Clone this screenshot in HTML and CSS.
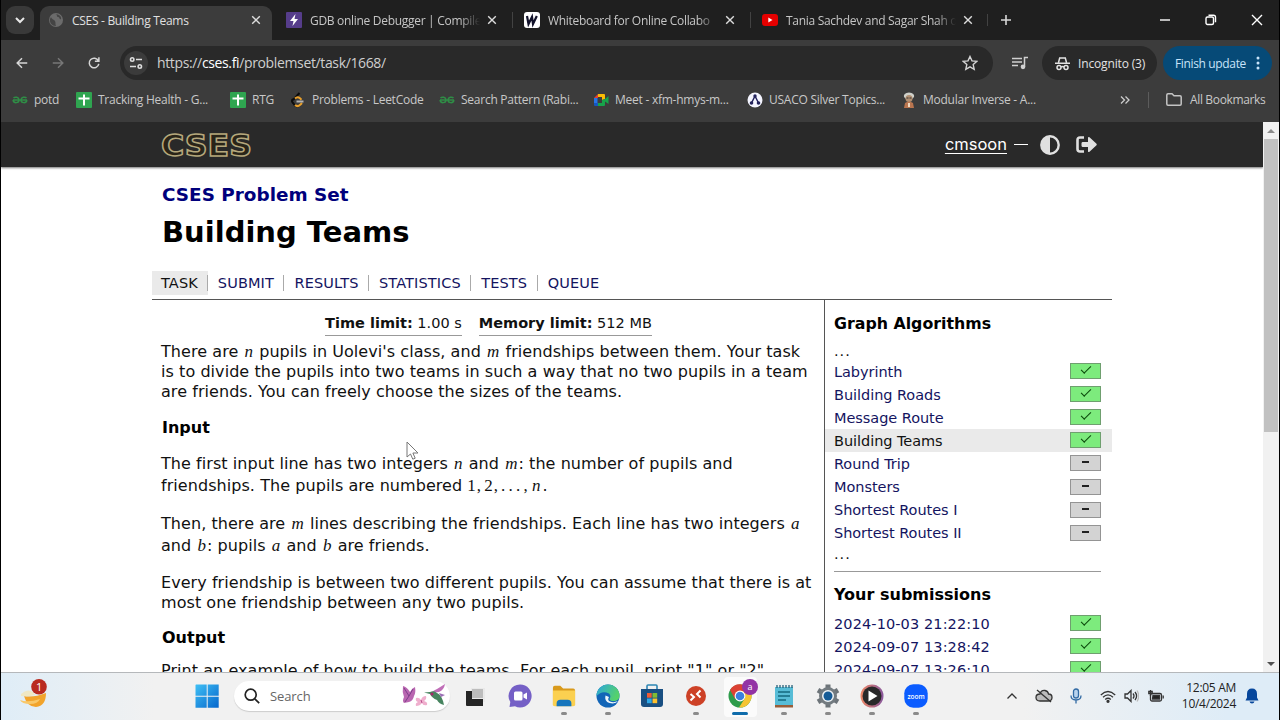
FILE: index.html
```html
<!DOCTYPE html>
<html lang="en">
<head>
    <meta charset="UTF-8">
    <meta name="viewport" content="width=device-width, initial-scale=1.0">
    <title>CSES - Building Teams</title>
    <link rel="stylesheet" href="styles.css">
</head>
<body>
<div class="screen">

    <!-- Tab strip -->
    <div class="tabstrip">
        <div class="tab-search">
            <svg width="12" height="12" viewBox="0 0 12 12" fill="none" stroke="#e8e8e8" stroke-width="2"><path d="M2 4l4 4 4-4"/></svg>
        </div>
        <div class="tab active">
            <svg class="fav" viewBox="0 0 16 16"><circle cx="8" cy="8" r="7" fill="#6b6b6b"/><path d="M3 5c1 3 3 2 4 4s0 3 1 5C4 14 1.500 11 2 7zM7 2c3 0 1 3 3 3s1 3 3 2c1-2-2-5-6-5z" fill="#444"/></svg>
            <span class="tab-title">CSES - Building Teams</span>
            <svg class="x" viewBox="0 0 10 10"><path d="M1.200 1.200l7.600 7.600M8.800 1.200l-7.600 7.600"/></svg>
        </div>
        <div class="tab">
            <svg class="fav" viewBox="0 0 16 16"><rect width="16" height="16" rx="1" fill="#563d8b"/><path d="M9.500 2L4 9h3.500L6.500 14 12 7H8.500z" fill="#fff"/></svg>
            <span class="tab-title fade">GDB online Debugger | Compile</span>
            <svg class="x" viewBox="0 0 10 10"><path d="M1.200 1.200l7.600 7.600M8.800 1.200l-7.600 7.600"/></svg>
        </div>
        <div class="tab">
            <svg class="fav" viewBox="0 0 16 16"><rect width="16" height="16" rx="3" fill="#fff"/><path d="M3 4l1.500 8L8 5l1 7 3.800-8" fill="none" stroke="#12122a" stroke-width="2.200"/></svg>
            <span class="tab-title fade">Whiteboard for Online Collabo</span>
            <svg class="x" viewBox="0 0 10 10"><path d="M1.200 1.200l7.600 7.600M8.800 1.200l-7.600 7.600"/></svg>
        </div>
        <div class="tab">
            <svg class="fav" viewBox="0 0 16 16"><rect y="2" width="16" height="12" rx="3" fill="#e60000"/><path d="M6.300 5.500v5l4.200-2.500z" fill="#fff"/></svg>
            <span class="tab-title fade">Tania Sachdev and Sagar Shah o</span>
            <svg class="x" viewBox="0 0 10 10"><path d="M1.200 1.200l7.600 7.600M8.800 1.200l-7.600 7.600"/></svg>
        </div>
        <svg class="new-tab" width="12" height="12" viewBox="0 0 12 12" stroke="#d8d8d8" stroke-width="1.600"><path d="M6 1v10M1 6h10"/></svg>
        <div class="win-buttons">
            <svg width="12" height="12" viewBox="0 0 12 12"><path d="M1 6h10"/></svg>
            <svg width="12" height="12" viewBox="0 0 12 12"><rect x="1" y="3" width="7.500" height="7.500" rx="1.500"/><path d="M3.500 1.200h5a2 2 0 0 1 2 2v5"/></svg>
            <svg width="12" height="12" viewBox="0 0 12 12"><path d="M1 1l10 10M11 1L1 11"/></svg>
        </div>
    </div>

    <!-- Toolbar -->
    <div class="toolbar">
        <svg class="nav-btn" viewBox="0 0 16 16"><path d="M14 8H3M8 2.500L2.500 8 8 13.500"/></svg>
        <svg class="nav-btn off" viewBox="0 0 16 16"><path d="M2 8h11M8 2.500L13.500 8 8 13.500"/></svg>
        <svg class="nav-btn" viewBox="0 0 16 16"><path d="M13 5.500A5.500 5.500 0 1 0 13.500 9M13.600 1.500V6H9"/></svg>
        <div class="omnibox">
            <span class="site-info">
                <svg width="14" height="14" viewBox="0 0 14 14" fill="none" stroke="#ddd" stroke-width="1.600"><circle cx="3.200" cy="3.500" r="1.700"/><path d="M7 3.500h6M1 10.500h6"/><circle cx="10.800" cy="10.500" r="1.700"/></svg>
            </span>
            <span class="url">https://<b>cses.fi</b>/problemset/task/1668/</span>
            <svg class="star" viewBox="0 0 16 16"><path d="M8 1.500l2 4.400 4.700.500-3.500 3.200 1 4.700L8 11.900l-4.200 2.400 1-4.700L1.300 6.400 6 5.900z"/></svg>
        </div>
        <svg class="media" viewBox="0 0 16 14"><path d="M0 2.500h10M0 6h10M0 9.500h6M12.500 10.500v-9H16"/><circle cx="11" cy="10.800" r="1.600" fill="#d0d0d0"/></svg>
        <div class="incognito">
            <svg width="15" height="15" viewBox="0 0 15 15" fill="none" stroke="#e2e2e2" stroke-width="1.500"><path d="M3.500 6.500L4.700 2h5.600l1.200 4.500M0 7.200h15"/><circle cx="4" cy="11.500" r="2"/><circle cx="11" cy="11.500" r="2"/><path d="M6 11q1.500-.8 3 0"/></svg>
            <span>Incognito (3)</span>
        </div>
        <div class="update">
            <span>Finish update</span>
            <svg width="4" height="14" viewBox="0 0 4 14" fill="#c8e4fa"><circle cx="2" cy="2" r="1.500"/><circle cx="2" cy="7" r="1.500"/><circle cx="2" cy="12" r="1.500"/></svg>
        </div>
    </div>

    <!-- Bookmarks -->
    <div class="bookmarks">
        <div class="bm"><svg class="bi" viewBox="0 0 16 16" fill="none" stroke="#2f8d46" stroke-width="1.500"><path d="M1 8h14M1.500 6C3 4.500 7 5 7 8s-5 4-6 0M14.500 6C13 4.500 9 5 9 8s5 4 6 0"/></svg><span>potd</span></div>
        <div class="bm"><svg class="bi" viewBox="0 0 16 16"><rect width="16" height="16" rx="1" fill="#2fa550"/><path d="M8 2.500v11M2.500 6.500h11" stroke="#fff" stroke-width="2"/></svg><span>Tracking Health - G...</span></div>
        <div class="bm"><svg class="bi" viewBox="0 0 16 16"><rect width="16" height="16" rx="1" fill="#2fa550"/><path d="M8 2.500v11M2.500 6.500h11" stroke="#fff" stroke-width="2"/></svg><span>RTG</span></div>
        <div class="bm"><svg class="bi" viewBox="0 0 16 16" fill="none" stroke-width="2"><path d="M9.500 1L3 8" stroke="#0c0c0c"/><path d="M3 7q-2 2 0 4l2 2.500q2.500 2 5-.5" stroke="#0c0c0c"/><path d="M5 6.500q2.500-2.500 5-.2l1.500 1.400M5 13q2.500 2.500 5.500-.5l1.500-1.500" stroke="#e9a02c"/><path d="M6.500 9.500h7" stroke="#b3b3b3"/></svg><span>Problems - LeetCode</span></div>
        <div class="bm"><svg class="bi" viewBox="0 0 16 16" fill="none" stroke="#2f8d46" stroke-width="1.500"><path d="M1 8h14M1.500 6C3 4.500 7 5 7 8s-5 4-6 0M14.500 6C13 4.500 9 5 9 8s5 4 6 0"/></svg><span>Search Pattern (Rabi...</span></div>
        <div class="bm"><svg class="bi" viewBox="0 0 16 16"><path d="M1 6l4-4v4z" fill="#e43d30"/><path d="M5 2h6q1 0 1 1v4l-3 1V5H5z" fill="#fbbc04"/><path d="M1 6h3.500v5H1z" fill="#2874e6"/><path d="M1 11h4v3H2q-1 0-1-1z" fill="#1556c0"/><path d="M5 11h4V8l3-1 3.500-3v8L12 9.500V13q0 1-1 1H5z" fill="#17a34a"/></svg><span>Meet - xfm-hmys-m...</span></div>
        <div class="bm"><svg class="bi" viewBox="0 0 16 16"><circle cx="8" cy="8" r="7.500" fill="#f4f5ff"/><path d="M8 4L4.500 11M8 4l3.500 7" stroke="#23235c" stroke-width="1.500"/><g fill="#23235c"><circle cx="8" cy="4" r="1.700"/><circle cx="4.500" cy="11" r="1.800"/><circle cx="11.500" cy="11" r="1.800"/></g></svg><span>USACO Silver Topics...</span></div>
        <div class="bm"><svg class="bi" viewBox="0 0 16 16"><path d="M3 5q-1-4 5-4.500Q14 1 13 5l-2 2H5z" fill="#cfd0c9"/><circle cx="8" cy="6.500" r="3.500" fill="#b18f72"/><path d="M5.500 6h2M8.500 6h2" stroke="#333"/><path d="M4 11q4-3 8 0l1 5H3z" fill="#b9754f"/><path d="M7 11h2v4H7z" fill="#f1d9c0"/></svg><span>Modular Inverse - A...</span></div>
        <svg class="more" width="10" height="10" viewBox="0 0 10 10" fill="none" stroke="#ccc" stroke-width="1.300"><path d="M1 1.500L4.500 5 1 8.500M5.500 1.500L9 5 5.500 8.500"/></svg>
        <i class="bm-sep"></i>
        <svg class="folder" width="16" height="13" viewBox="0 0 16 13" fill="none" stroke="#c4c4c4" stroke-width="1.500"><path d="M.8 2q0-1.200 1.200-1.200h4l2 2h6q1.200 0 1.200 1.200v7q0 1.200-1.200 1.200H2Q.8 12.200.8 11z"/></svg>
        <span class="all">All Bookmarks</span>
    </div>

    <!-- Page -->
    <div class="viewport">
        <div class="page">
            <div class="header">
                <svg class="logo" width="94" height="28" viewBox="0 0 94 28"><text x="1" y="25" textLength="91" lengthAdjust="spacingAndGlyphs">CSES</text></svg>
                <div class="controls">
                    <a href="#">cmsoon</a>
                    <span class="dash"></span>
                    <svg class="theme" width="20" height="20" viewBox="0 0 20 20"><circle cx="10" cy="10" r="8.700" fill="none" stroke="#e0e0e0" stroke-width="2.400"/><path d="M10 1a9 9 0 0 0 0 18z" fill="#e0e0e0"/></svg>
                    <svg width="21" height="17" viewBox="0 0 21 17"><path d="M8 1.500H4Q1.500 1.500 1.500 4v9Q1.500 15.500 4 15.500h4" fill="none" stroke="#e0e0e0" stroke-width="2.600"/><path d="M6.500 6H12V1.500q.5-1 1.500-.3l7 6.500q.6.800 0 1.500l-7 6.500q-1 .7-1.500-.3V11H6.500q-1-.2-1-1.200V7.200q0-1 1-1.200z" fill="#e0e0e0"/></svg>
                </div>
            </div>

            <div class="title-block">
                <h3><a href="#">CSES Problem Set</a></h3>
                <h1>Building Teams</h1>
                <ul class="nav">
                    <li class="current"><a href="#">TASK</a></li>
                    <li><a href="#">SUBMIT</a></li>
                    <li><a href="#">RESULTS</a></li>
                    <li><a href="#">STATISTICS</a></li>
                    <li><a href="#">TESTS</a></li>
                    <li><a href="#">QUEUE</a></li>
                </ul>
            </div>

            <div class="content-wrapper">
                <div class="content">
                    <ul class="limits">
                        <li><b>Time limit:</b> 1.00 s</li>
                        <li><b>Memory limit:</b> 512 MB</li>
                    </ul>
                    <p>There are <i>n</i> pupils in Uolevi's class, and <i>m</i> friendships between them. Your task<br>
                    is to divide the pupils into two teams in such a way that no two pupils in a team<br>
                    are friends. You can freely choose the sizes of the teams.</p>
                    <h4>Input</h4>
                    <p class="math">The first input line has two integers <i>n</i> and <i>m</i>: the number of pupils and<br>
                    friendships. The pupils are numbered <span class="num">1,&#8202;2,&#8202;.&#8202;.&#8202;.&#8202;,&#8202;<i>n</i></span>.</p>
                    <p class="math">Then, there are <i>m</i> lines describing the friendships. Each line has two integers <i>a</i><br>
                    and <i>b</i>: pupils <i>a</i> and <i>b</i> are friends.</p>
                    <p>Every friendship is between two different pupils. You can assume that there is at<br>
                    most one friendship between any two pupils.</p>
                    <h4>Output</h4>
                    <p class="print">Print an example of how to build the teams. For each pupil, print "1" or "2"</p>
                </div>

                <div class="sidebar">
                    <h4>Graph Algorithms</h4>
                    <div class="dots">...</div>
                    <div class="row"><a href="#">Labyrinth</a><span class="score full"></span></div>
                    <div class="row"><a href="#">Building Roads</a><span class="score full"></span></div>
                    <div class="row"><a href="#">Message Route</a><span class="score full"></span></div>
                    <div class="row current"><a href="#">Building Teams</a><span class="score full"></span></div>
                    <div class="row"><a href="#">Round Trip</a><span class="score"></span></div>
                    <div class="row"><a href="#">Monsters</a><span class="score"></span></div>
                    <div class="row"><a href="#">Shortest Routes I</a><span class="score"></span></div>
                    <div class="row"><a href="#">Shortest Routes II</a><span class="score"></span></div>
                    <div class="dots last">...</div>
                    <hr>
                    <h4 class="sub">Your submissions</h4>
                    <div class="row date"><a href="#">2024-10-03 21:22:10</a><span class="score full"></span></div>
                    <div class="row date"><a href="#">2024-09-07 13:28:42</a><span class="score full"></span></div>
                    <div class="row date"><a href="#">2024-09-07 13:26:10</a><span class="score full"></span></div>
                </div>
            </div>
        </div>
        <div class="scrollbar">
            <span class="arrow up"></span>
            <span class="thumb"></span>
            <span class="arrow down"></span>
        </div>
    </div>

    <!-- Taskbar -->
    <div class="taskbar">
        <div class="weather">
            <svg width="28" height="30" viewBox="0 0 28 30"><path d="M4 17q9 2 22-3 0 13-10 14-9 0-12-11z" fill="#f2a42c"/><path d="M0 21q8 3 20-1-2 5-10 5T0 21z" fill="#f9c869"/><path d="M1 15q6-6 12-2l2 3q-6 2-14 1z" fill="#efe7c4"/><circle cx="19" cy="7.800" r="7.800" fill="#b92a20"/></svg>
            <span class="count">1</span>
        </div>
        <svg class="start" width="24" height="24" viewBox="0 0 24 24"><defs><linearGradient id="win" x1="0" y1="0" x2="1" y2="1"><stop offset="0" stop-color="#3fc0f5"/><stop offset="1" stop-color="#0666cc"/></linearGradient></defs><path d="M1 .5h10.700v11.200H.5V1zM12.700.5h11v11.200h-11zM.5 12.700h11.200v11H.5zM12.700 12.700h11v11h-11z" fill="url(#win)"/></svg>
        <div class="search">
            <svg width="16" height="16" viewBox="0 0 16 16" fill="none" stroke="#222" stroke-width="1.700"><circle cx="6.700" cy="6.700" r="5.500"/><path d="M10.800 10.800l4.400 4.400"/></svg>
            <span>Search</span>
            <svg class="bird" width="46" height="26" viewBox="0 0 46 26">
                <path d="M2 3q4 1 7 6 2-4 5-5 1 6-1 9-1 5-5 6l-5 1q-2-2 0-6Q1 9 2 3z" fill="#b966b0"/>
                <path d="M3 5l5 8-4 6M12 6l-4 7" stroke="#7d3f8b" fill="none"/>
                <path d="M15 15q3-1 5 2 1-4 5-4 1 3-2 5 4 1 3 4-4 1-5-2-2 3-6 3-1-3 2-4-3-1-2-4z" fill="#efaecd"/>
                <path d="M20 17l1 3" stroke="#b9508c"/>
                <path d="M30 10q3-3 6-4l8-5q-1 6-6 8z" fill="#c06fb8"/>
                <path d="M23 9.500l6-.5q4-2 7 1 5 2 7 12-5-1-7-5-5-2-7-6z" fill="#47845f"/>
                <path d="M38 10l6 2-4 2z" fill="#9b6fb5"/>
                <circle cx="31" cy="11" r="1.500" fill="#a92568"/>
            </svg>
        </div>
        <div class="apps">
            <div class="app"><svg viewBox="0 0 24 24"><path d="M8 4h14v14H8z" fill="#e9e9e9"/><path d="M9 5h11v9H9z" fill="#bdbdbd"/><path d="M3 7h6v8h11v7H4q-1 0-1-1z" fill="#252525"/></svg></div>
            <div class="app"><svg viewBox="0 0 24 24"><path d="M12 .5a11.500 11.500 0 1 1-5 21.800L1.500 23l.8-5A11.500 11.500 0 0 1 12 .5z" fill="#7560c6"/><rect x="6" y="7.500" width="8.500" height="9" rx="1.500" fill="#fff"/><path d="M15.500 10.500l3.500-2v7l-3.500-2z" fill="#fff"/></svg></div>
            <div class="app open"><svg viewBox="0 0 26 24"><path d="M1 3q0-2 2-2h6l3 3h11q2 0 2 2v16H1z" fill="#d99a1c"/><path d="M1 6h24v15q0 2-2 2H3q-2 0-2-2z" fill="#fbd050"/><path d="M5 23v-3q0-4 4-4h8q4 0 4 4v3z" fill="#1676bd"/></svg></div>
            <div class="app open"><svg viewBox="0 0 24 24"><defs><linearGradient id="edge" x1="0" y1="0" x2="1" y2=".4"><stop offset="0" stop-color="#2ba5df"/><stop offset="1" stop-color="#55d26a"/></linearGradient></defs><circle cx="12" cy="12" r="11.500" fill="#1265b7"/><path d="M.5 12A11.500 11.500 0 0 1 23.500 12q0 4-4.500 5-5 .5-5.500-2 2-3-.5-5.500Q6 6 .5 12z" fill="url(#edge)"/><path d="M9.500 11.500q-1.500 6 4 7.500 6 1.500 8.500-2-4 2-8 .5-3-1.500-1-4.500z" fill="#eef6fb"/></svg></div>
            <div class="app"><svg viewBox="0 0 24 24"><path d="M7 5V2q0-1 1-1h8q1 0 1 1v3" fill="none" stroke="#2d86b4" stroke-width="1.600"/><path d="M1 5h22v15q0 3-3 3H4q-3 0-3-3z" fill="#194f82"/><path d="M7 9h4.700v4.700H7z" fill="#ef5b35"/><path d="M12.500 9h4.700v4.700h-4.700z" fill="#80bb35"/><path d="M7 14.500h4.700v4.700H7z" fill="#2da8e8"/><path d="M12.500 14.500h4.700v4.700h-4.700z" fill="#fdc12f"/></svg></div>
            <div class="app open"><svg viewBox="0 0 24 24"><circle cx="12" cy="12" r="10" fill="#cd4126"/><path d="M6.500 10l3.500 3-3.500 3.500M16.500 6.500l-3.500 3.500 3.500 3.500" fill="none" stroke="#fff" stroke-width="2"/></svg></div>
            <div class="app open chrome"><svg viewBox="0 0 24 24"><circle cx="12" cy="12" r="11.500" fill="#2e9c4b"/><path d="M2 6A11.500 11.500 0 0 1 22.400 7H12l-5 8z" fill="#dc4234"/><path d="M12 7h10.400A11.500 11.500 0 0 1 11 23.500L17 14z" fill="#f6c433"/><circle cx="12" cy="12" r="5.400" fill="#fff"/><circle cx="12" cy="12" r="4.300" fill="#3b80df"/></svg><span class="profile">a</span></div>
            <div class="app open"><svg viewBox="0 0 24 24"><path d="M3 3h18v19H3z" fill="#57bcd6"/><path d="M3 21h18v2.500H3z" fill="#995d38"/><path d="M5 1v3M8 1v3M11 1v3M14 1v3M17 1v3M20 1v3" stroke="#286079" stroke-width="1.300"/><path d="M6 8h12M6 12h12M6 16h8" stroke="#15687f" stroke-width="1.300"/></svg></div>
            <div class="app open"><svg viewBox="0 0 24 24"><g stroke="#6d7479" stroke-width="5"><path d="M12 .5v23M2 6.200l20 11.600M2 17.800L22 6.200"/></g><circle cx="12" cy="12" r="7.500" fill="#f0f4f7" stroke="#737b80" stroke-width="3"/><circle cx="12" cy="12" r="4.500" fill="#155b96"/></svg></div>
            <div class="app open"><svg viewBox="0 0 24 24"><defs><linearGradient id="play"><stop offset="0" stop-color="#ed8764"/><stop offset="1" stop-color="#88579e"/></linearGradient></defs><circle cx="12" cy="12" r="11.500" fill="url(#play)"/><circle cx="12" cy="12" r="9.500" fill="#292929"/><path d="M8.500 6.500l9 5.500-9 5.500z" fill="#fff"/></svg></div>
            <div class="app open"><svg viewBox="0 0 24 24"><rect x=".3" y=".3" width="23.400" height="23.400" rx="9" fill="#0b5cff"/></svg><span class="zoom">zoom</span></div>
        </div>
        <div class="tray">
            <svg width="12" height="8" viewBox="0 0 12 8"><path d="M1.500 6.500L6 2l4.500 4.500"/></svg>
            <svg width="18" height="14" viewBox="0 0 18 14"><path d="M5 12q-4 0-4-3.500T5 5q1-4 5-3.500 3 .5 3.500 3.500 3.500 0 3.500 3.500T13 12z" fill="#bbb"/><path d="M2 1l14 12"/></svg>
            <svg class="mic" width="12" height="16" viewBox="0 0 12 16"><rect x="3.500" y="1" width="5" height="9" rx="2.500" fill="#b8d3ee"/><path d="M1 7.500q0 4.500 5 4.500t5-4.500M6 12v3.500"/></svg>
            <svg width="16" height="13" viewBox="0 0 16 13"><path d="M.8 5Q8-2 15.200 5M3 7.300q5-4.800 10 0M5.200 9.500q2.800-2.500 5.600 0"/><circle cx="8" cy="11.300" r="1" fill="#333"/></svg>
            <svg width="15" height="14" viewBox="0 0 15 14"><path d="M1 5h2.500L7 1.500v11L3.500 9H1zM9 4.500q2 2.500 0 5M11 3q3.200 4 0 8"/><path d="M13 1.500q3.500 5.500 0 11" stroke="#bbb"/></svg>
            <svg width="16" height="14" viewBox="0 0 16 14"><rect x="2.500" y="4.500" width="11" height="7.500" rx="1.500"/><path d="M5 6.500h6.500V10H4.500z" fill="#222"/><path d="M15.200 6.500v3M2.500 1v6M.8 2.500h3.400v2H.8z"/></svg>
        </div>
        <div class="clock">12:05 AM<br>10/4/2024</div>
        <svg class="bell" width="14" height="16" viewBox="0 0 14 16"><path d="M7 .5q5 0 5 5.500v3.500l1.500 3H.5l1.500-3V6Q2 .5 7 .5zM4.500 13.500h5Q9 15.500 7 15.500t-2.500-2z" fill="#07479c"/></svg>
    </div>

    <!-- mouse pointer -->
    <svg class="pointer" width="13" height="19" viewBox="0 0 13 19"><path d="M1 1v15l3.500-3 2.300 5.200 2.400-1-2.300-5.200H12z" fill="#fff" stroke="#777"/></svg>
</div>
</body>
</html>
```
FILE: styles.css
```css
body {
    margin: 0;
    background: #000;
    overflow: hidden;
}
a {
    color: #14145f;
    text-decoration: none;
}
.screen {
    width: 1278px;
    height: 720px;
    margin: 0 1px;
    display: flex;
    flex-direction: column;
    position: relative;
    overflow: hidden;
    font-family: "Open Sans", "Noto Sans", sans-serif;
    font-size: 12px;
    background: #3c3c3c;
}

/* tabs */
.tabstrip {
    height: 40px;
    flex: none;
    display: flex;
    align-items: center;
    background: #1f1f1f;
    color: #c6c6c6;
}
.tab-search {
    width: 28px;
    height: 28px;
    margin-left: 5px;
    border-radius: 9px;
    background: #393939;
    display: flex;
    align-items: center;
    justify-content: center;
}
.tab {
    box-sizing: border-box;
    width: 238px;
    height: 34px;
    margin-top: 6px;
    padding: 0 13px 6px 14px;
    display: flex;
    align-items: center;
    position: relative;
}
.tab.active {
    width: 232px;
    margin-left: 6px;
    padding-left: 8px;
    padding-right: 11px;
    border-radius: 9px 9px 0 0;
    background: #3c3c3c;
    color: #e0e0e0;
}
.tab + .tab + .tab::before,
.tab + .new-tab {
    border-left: 1px solid #424242;
}
.tab + .tab + .tab::before {
    content: "";
    position: absolute;
    left: 2px;
    top: 6px;
    height: 16px;
}
.fav {
    width: 16px;
    height: 16px;
    margin-right: 8px;
    flex: none;
}
.tab-title {
    flex: 1;
    white-space: nowrap;
    font-size: 12px;
    letter-spacing: -0.3px;
}
.tab-title.fade {
    flex: none;
    width: 170px;
}
.fade {
    -webkit-mask-image: linear-gradient(to right, #000 88%, transparent);
    mask-image: linear-gradient(to right, #000 88%, transparent);
}
.x {
    width: 10px;
    height: 10px;
    margin-left: auto;
    flex: none;
    stroke: #dcdcdc;
    stroke-width: 1.4;
}
.new-tab {
    padding-left: 12px;
    margin-left: 1px;
}
.win-buttons {
    margin-left: auto;
    margin-right: 16px;
    display: flex;
    gap: 34px;
    fill: none;
    stroke: #fff;
    stroke-width: 1.4;
}

/* toolbar */
.toolbar {
    height: 46px;
    flex: none;
    display: flex;
    align-items: center;
    background: #3c3c3c;
    color: #e2e2e2;
}
.nav-btn {
    width: 14px;
    height: 14px;
    margin-left: 14px;
    margin-right: 8px;
    fill: none;
    stroke: #d6d6d6;
    stroke-width: 1.7;
}
.nav-btn.off {
    stroke: #777;
}
.omnibox {
    width: 873px;
    height: 34px;
    margin-left: 11px;
    border-radius: 17px;
    background: #292929;
    display: flex;
    align-items: center;
}
.site-info {
    width: 24px;
    height: 24px;
    margin-left: 4px;
    border-radius: 12px;
    background: #3b3b3b;
    display: flex;
    align-items: center;
    justify-content: center;
}
.url {
    margin-left: 9px;
    margin-top: -1px;
    font-size: 14px;
    letter-spacing: -0.36px;
    color: #cfcfcf;
}
.url b {
    color: #fff;
    font-weight: 400;
}
.star {
    width: 16px;
    height: 16px;
    margin-left: auto;
    margin-right: 15px;
    fill: none;
    stroke: #d4d4d4;
    stroke-width: 1.4;
}
.media {
    width: 16px;
    height: 14px;
    margin-left: 19px;
    fill: none;
    stroke: #d0d0d0;
    stroke-width: 1.5;
}
.incognito, .update {
    box-sizing: border-box;
    height: 34px;
    border-radius: 17px;
    display: flex;
    align-items: center;
    white-space: nowrap;
}
.incognito {
    width: 115px;
    margin-left: 14px;
    padding-left: 13px;
    gap: 8px;
    background: #292929;
    letter-spacing: -0.15px;
}
.update {
    width: 109px;
    margin-left: 6px;
    padding-left: 12px;
    gap: 10px;
    background: #064a77;
    color: #c8e4fa;
    letter-spacing: -0.35px;
}

/* bookmarks bar */
.bookmarks {
    height: 36px;
    flex: none;
    padding: 0 13px 9px 11px;
    box-sizing: border-box;
    display: grid;
    grid-template-columns: 64px 154px 60px 149px 154px 154px 154px 219px 28px 18px 24px auto;
    align-items: center;
    color: #c8c8c8;
    white-space: nowrap;
}
.bm {
    display: flex;
    align-items: center;
    gap: 6px;
    letter-spacing: -0.25px;
}
.bi {
    width: 16px;
    height: 16px;
    flex: none;
}
.bm-sep {
    width: 1px;
    height: 16px;
    background: #5c5c5c;
}
.all {
    letter-spacing: -0.35px;
}

/* page */
.viewport {
    height: 550px;
    flex: none;
    display: flex;
    overflow: hidden;
    background: #fff;
}
.page {
    width: 1262px;
    font-family: "DejaVu Sans", Verdana, sans-serif;
    font-size: 14.5px;
    color: #111;
}
.header {
    height: 45px;
    padding: 0 166px 0 159px;
    box-sizing: border-box;
    display: flex;
    align-items: center;
    justify-content: space-between;
    background: #292929;
    box-shadow: 0 1px 2px #777;
}
.logo text {
    font-family: "DejaVu Sans", sans-serif;
    font-weight: 700;
    font-size: 30px;
    fill: #292418;
    stroke: #b5a87c;
    stroke-width: 1.5;
}
.controls {
    display: flex;
    align-items: center;
    font-family: Inter, "Open Sans", sans-serif;
    font-size: 16.5px;
}
.controls a {
    margin-top: -2px;
    color: #fff;
    text-decoration: underline;
    text-underline-offset: 3px;
}
.dash {
    width: 14px;
    height: 1px;
    margin: 0 12px 0 7px;
    background: #fff;
}
.theme {
    margin-right: 16px;
}
.title-block {
    width: 960px;
    height: 132px;
    margin-left: 151px;
    border-bottom: 1px solid #555;
    display: flex;
    flex-direction: column;
}
h3, h1, h4 {
    margin: 0;
    color: #000;
}
h3 {
    padding: 16px 0 0 10px;
    font-size: 18.4px;
    line-height: 24px;
}
h3 a {
    color: #00007c;
}
h1 {
    padding: 8px 0 0 10px;
    font-size: 29px;
    line-height: 34px;
}
.nav {
    margin: 22px 0 0;
    padding: 0;
    list-style: none;
    display: flex;
    letter-spacing: 0.12px;
}
.nav li {
    height: 24px;
    line-height: 24px;
    padding: 0 10.5px 0 10px;
    position: relative;
}
.nav li + li::before {
    content: "";
    position: absolute;
    left: -1px;
    top: 4px;
    height: 16px;
    border-left: 1px solid #aaa;
}
.nav .current {
    padding: 0 10px 0 9px;
    background: #eaeaea;
}
.nav .current a, .row.current a {
    color: #111;
}
.content-wrapper {
    width: 960px;
    margin-left: 151px;
    display: flex;
}
.content {
    width: 662px;
    height: 400px;
    padding-left: 10px;
    border-right: 1px solid #555;
    white-space: nowrap;
}
.limits {
    margin: 12px 9px 6px 0;
    padding: 0;
    list-style: none;
    display: flex;
    justify-content: center;
    gap: 17px;
}
.limits li {
    height: 23px;
    line-height: 23px;
    border-bottom: 1px solid #999;
}
.content p {
    margin: 0 0 15px -1px;
    font-size: 16px;
    letter-spacing: 0.06px;
    line-height: 20.200px;
}
.content p.math {
    line-height: 22px;
    margin-bottom: 16px;
}
.content i, .num {
    font-family: "Liberation Serif", serif;
    font-size: 17px;
    line-height: 1;
}
.content i {
    padding: 0 1px;
}
.num {
    letter-spacing: 0.9px;
}
.content h4 {
    height: 20px;
    line-height: 20px;
    margin-bottom: 15px;
    font-size: 16px;
    letter-spacing: 0;
}
.content p.print {
    margin-top: -2px;
}
.sidebar {
    width: 287px;
}
.sidebar h4 {
    height: 20px;
    line-height: 20px;
    margin: 14px 0 8px 9px;
    font-size: 15.8px;
}
.sidebar h4.sub {
    margin-top: 13px;
    margin-bottom: 7.500px;
    font-size: 16px;
}
.dots {
    padding-left: 9px;
    height: 18px;
    line-height: 19px;
    letter-spacing: 1px;
}
.dots.last {
    height: 21px;
}
.row {
    height: 23.100px;
    padding: 0 11px 0 9px;
    display: flex;
    align-items: center;
    justify-content: space-between;
    letter-spacing: -0.05px;
}
.row.date {
    letter-spacing: 0.1px;
}
.row.current {
    background: #eaeaea;
}
.score {
    box-sizing: border-box;
    width: 31px;
    height: 16px;
    margin-top: -1px;
    border: 1px solid #949494;
    background: #d3d3d3;
    display: flex;
    align-items: center;
    justify-content: center;
}
.score::before {
    content: "";
    width: 7px;
    height: 2px;
    margin-bottom: 2px;
    background: #222;
}
.score.full {
    background: #7deb7d;
    border-color: #6f9f6f;
}
.score.full::before {
    width: 9px;
    height: 4px;
    margin-bottom: 5px;
    background: none;
    border-left: 1.500px solid #0a480a;
    border-bottom: 1.500px solid #0a480a;
    transform: rotate(-45deg);
}
.sidebar hr {
    margin: 5px 11px 0 9px;
    border: 0;
    border-top: 1px solid #999;
}
.scrollbar {
    width: 16px;
    background: #f1f1f1;
    display: flex;
    flex-direction: column;
    align-items: center;
}
.arrow {
    border: 4px solid transparent;
}
.arrow.up {
    border-bottom-color: #8b8b8b;
    border-top: 0;
    margin: 7px 0 6px;
}
.arrow.down {
    border-top-color: #505050;
    border-bottom: 0;
    margin: auto 0 6px;
}
.thumb {
    width: 14px;
    height: 293px;
    background: #c1c1c1;
}

/* taskbar */
.taskbar {
    height: 48px;
    box-sizing: border-box;
    flex: none;
    display: flex;
    align-items: center;
    padding-bottom: 1px;
    border-top: 1px solid #b5b8bb;
    background: linear-gradient(to right, #dfedf7, #f1f1f1 12%, #f1f1f1 80%, #deecf7 96%);
    color: #222;
}
.weather {
    position: relative;
    width: 28px;
    height: 30px;
    margin: -4px 0 0 19px;
}
.count {
    position: absolute;
    left: 16px;
    top: 0;
    font-size: 11px;
    line-height: 15px;
    color: #fff;
}
.start {
    margin-left: 147px;
}
.search {
    box-sizing: border-box;
    width: 216px;
    height: 30px;
    margin-left: 15px;
    padding: 0 3px 0 10px;
    border-radius: 15px;
    background: #fff;
    box-shadow: 0 1px 1px #ccc;
    display: flex;
    align-items: center;
}
.search span {
    margin-left: 10px;
    font-size: 13px;
    letter-spacing: -0.1px;
    color: #666;
}
.bird {
    margin-left: auto;
}
.apps {
    display: flex;
    margin-left: 2px;
}
.app {
    width: 44px;
    height: 46px;
    display: flex;
    align-items: center;
    justify-content: center;
    position: relative;
}
.app:first-child {
    width: 46px;
}
.app svg {
    width: 24px;
    height: 24px;
}
.app.open::after {
    content: "";
    position: absolute;
    bottom: 4px;
    left: 19px;
    width: 6px;
    height: 3px;
    border-radius: 2px;
    background: #8a8a8a;
}
.app.chrome::before {
    content: "";
    position: absolute;
    inset: 4px 5px 2px 6px;
    border-radius: 4px;
    background: #fbfbfb;
}
.app.chrome svg {
    position: relative;
}
.app.chrome::after {
    left: 14px;
    width: 16px;
    background: #0f6cab;
}
.profile {
    position: absolute;
    right: 4px;
    top: 6px;
    width: 16px;
    height: 16px;
    border-radius: 8px;
    background: #9334a5;
    color: #fff;
    font-size: 9px;
    line-height: 15px;
    text-align: center;
}
.zoom {
    position: absolute;
    font-size: 6.5px;
    font-weight: 600;
    color: #fff;
}
.tray {
    margin-left: auto;
    display: flex;
    align-items: center;
    fill: none;
    stroke: #333;
    stroke-width: 1.300;
}
.tray svg:nth-child(2) { margin-left: 17px; }
.tray svg:nth-child(3) { margin-left: 17px; }
.tray svg:nth-child(4) { margin-left: 18px; }
.tray svg:nth-child(5) { margin-left: 8px; }
.tray svg:nth-child(6) { margin-left: 9px; }
.tray .mic {
    stroke: #316aa4;
}
.clock {
    width: 62px;
    margin-left: 10px;
    text-align: right;
    line-height: 16px;
    letter-spacing: -0.3px;
}
.bell {
    margin: 0 20px 0 9px;
}
.pointer {
    position: absolute;
    left: 405px;
    top: 441px;
}
```
